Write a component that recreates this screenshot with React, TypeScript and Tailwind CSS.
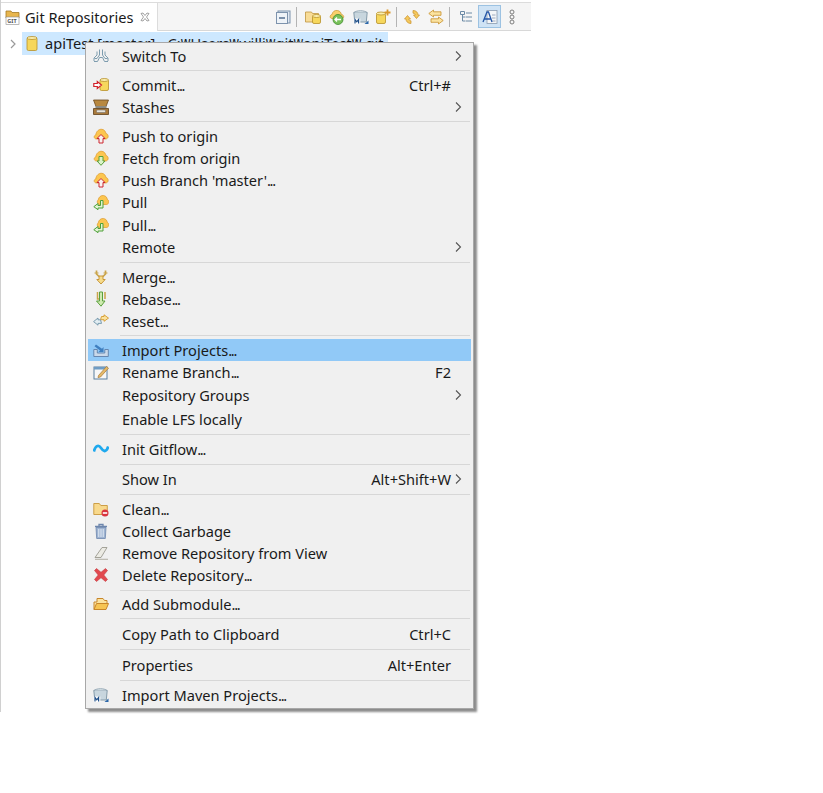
import React from 'react';

const F = '[font-family:"Noto_Sans",sans-serif]';

// ─── Icons ────────────────────────────────────────────────────────────────────

const Svg: React.FC<{ children: React.ReactNode; className?: string }> = ({ children, className }) => (
  <svg viewBox="0 0 16 16" width="16" height="16" className={className ?? 'shrink-0'}>{children}</svg>
);

const Cyl = ({ x, y, w, h }: { x: number; y: number; w: number; h: number }) => (
  <g>
    <rect x={x} y={y + 1} width={w} height={h - 2} rx={1.5} fill="#f6d75c" stroke="#b8912a" strokeWidth="0.8" />
    <ellipse cx={x + w / 2} cy={y + 1.5} rx={w / 2} ry={1.5} fill="#fbeeae" stroke="#b8912a" strokeWidth="0.8" />
  </g>
);

const Cloud = () => (
  <path d="M3.500 11C.8 11 .3 7.500 2.800 7 3 3.500 6 .8 9 1.300c2.500.4 3.600 2.300 3.900 4.200 2.800.3 3.200 5 .1 5.500z" fill="#fcc64f" stroke="#dc982b" strokeWidth="0.7" />
);

const CloudRight = () => (
  <path d="M6 10.500C4 9.500 3.600 6.800 5.200 6 5.700 3 7.800 1.300 10.300 1.500c2.500.2 3.800 2 4 3.900 2.200.8 1.900 4.600-.5 5.100z" fill="#fcc64f" stroke="#dc982b" strokeWidth="0.7" />
);

const UpArrow = () => <path d="M8 6.500l4 4H10V15H6v-4.500H4z" fill="#f8f2f0" stroke="#cc2630" strokeWidth="1" />;
const DownArrow = () => <path d="M6 6.500h4V11h2l-4 4.300L4 11h2z" fill="#dcf2c8" stroke="#58a03a" strokeWidth="1" />;
const PullArrow = () => <path d="M7.500 6.500V11.500H5V9.500L.8 12.700 5 15.700V14H10V6.500z" fill="#e2f4d2" stroke="#4ea03a" strokeWidth="1" />;

const icons: Record<string, React.ReactNode> = {
  switch: (
    <Svg>
      <g fill="none" stroke="#7d9cae" strokeWidth="1">
        <path d="M6.500 1.500v5.500M9.500 1.500v5.500M4 3.500V7L1 10v3M12 3.500V7l3 3v3" />
        <path d="M1 13.500h3.500l2-4h3l2 4H15M6.500 7L4 10.500M9.500 7L12 10.500M4 10.500H1.500M12 10.500h2.500" />
      </g>
    </Svg>
  ),
  commit: (
    <Svg>
      <Cyl x={7} y={1.500} w={8.500} h={13} />
      <path d="M.8 6.500h3.500V4.500L8.500 8 4.300 11.500V9.500H.8z" fill="#fff" stroke="#d2202a" strokeWidth="1.200" />
    </Svg>
  ),
  stash: (
    <Svg>
      <path d="M.5 1h15l-2.500 6.500H3z" fill="#b8883f" stroke="#6d4a1f" strokeWidth="0.8" />
      <rect x="2.500" y="7" width="11" height="2.500" fill="#8b8a82" />
      <path d="M.5 9.500h15v6H.5z" fill="#a97a3c" stroke="#5f4019" strokeWidth="0.8" />
      <rect x="3.500" y="11" width="9" height="2.500" rx="1" fill="#e8e4da" stroke="#666" strokeWidth="0.5" />
    </Svg>
  ),
  push: <Svg><Cloud /><UpArrow /></Svg>,
  fetch: <Svg><Cloud /><DownArrow /></Svg>,
  pull: <Svg><CloudRight /><PullArrow /></Svg>,
  merge: (
    <Svg>
      <path d="M3.500 1.500v3.500L6 7.500M12.500 1.500v3.500L10 7.500" fill="none" stroke="#c9a44a" strokeWidth="1.700" />
      <path d="M1.500 4h4M10.500 4h4" stroke="#c9a44a" strokeWidth="1.100" />
      <path d="M6 7h4v3.500h2.200L8 15l-4.200-4.500H6z" fill="#f6dc8c" stroke="#c48f2c" strokeWidth="0.9" />
    </Svg>
  ),
  rebase: (
    <Svg>
      <path d="M4.500 1v7h2M12 1v7" fill="none" stroke="#c9a44a" strokeWidth="1.500" />
      <path d="M6.500 1h3v9h2.500L8 15.200 3.500 10h3z" fill="#cfeab0" stroke="#5aa03c" strokeWidth="1" />
    </Svg>
  ),
  reset: (
    <Svg>
      <path d="M8.500 3.500H11V1.800l4.500 3.300L11 8.300V6.700H7.500z" fill="#fbe3a0" stroke="#d59a2a" strokeWidth="0.9" />
      <path d="M7.500 6.800H5V5L.6 8.600 5 12.200v-1.800h3.500z" fill="#e2edf2" stroke="#6e93a8" strokeWidth="0.9" />
    </Svg>
  ),
  import: (
    <Svg>
      <path d="M.8 7.500h3.500v3.500h7.500V7.500h3.500V14.500H.8z" fill="#c9d8ea" stroke="#5f7fa8" strokeWidth="0.9" />
      <path d="M3 2.500l6 4.300L10.500 5v5H5.500L7 8.500 1.500 4.300z" fill="#3f7fc0" />
    </Svg>
  ),
  rename: (
    <Svg>
      <rect x="1" y="3" width="13" height="12" fill="#f7f7f7" stroke="#5b7f9e" strokeWidth="1" />
      <rect x="1" y="3" width="13" height="2.500" fill="#6f9cc4" />
      <path d="M5.500 11.500l8-9 2 1.700L7.500 13l-2.500.6z" fill="#e6b968" stroke="#a3783a" strokeWidth="0.7" />
    </Svg>
  ),
  gitflow: (
    <Svg>
      <path d="M.8 10.500C3 3.500 6 4 8 7s5 5.500 7.300-1.500" fill="none" stroke="#1fa9ee" strokeWidth="2.800" />
    </Svg>
  ),
  clean: (
    <Svg>
      <path d="M.8 2.500h5.500l1.500 2h6.500v9H.8z" fill="#f8d98c" stroke="#c8963a" strokeWidth="0.9" />
      <circle cx="12" cy="12" r="3.500" fill="#d8343f" />
      <rect x="9.800" y="11.200" width="4.400" height="1.600" fill="#fff" />
    </Svg>
  ),
  trash: (
    <Svg>
      <path d="M2 3.500h12M6 3.500V1.500h4v2" fill="none" stroke="#6d86ad" strokeWidth="1.300" />
      <path d="M3 4.500h10L12.300 15.500H3.700z" fill="#9fb4d2" stroke="#6d86ad" strokeWidth="0.8" />
      <path d="M5.800 6v8M8 6v8M10.200 6v8" stroke="#e4ebf4" strokeWidth="1" />
    </Svg>
  ),
  remove: (
    <Svg>
      <path d="M2 12.500L9 2.500h5L8 12.500z" fill="#ecebe4" stroke="#9b9a90" strokeWidth="0.9" />
      <path d="M2 14.300h13" stroke="#b5b3a8" strokeWidth="1.100" />
    </Svg>
  ),
  del: (
    <Svg>
      <path d="M1.500 3.500L3.500 1.500 8 5.300 12.500 1.500l2 2L10.800 8l3.700 4.500-2 2L8 10.700 3.500 14.500l-2-2L5.200 8z" fill="#e2494f" stroke="#c43a40" strokeWidth="0.6" />
    </Svg>
  ),
  submodule: (
    <Svg>
      <path d="M1 13.500V6h3V2.500h6l1.500 2h2.500v4" fill="#fbe3a0" stroke="#c8862a" strokeWidth="1" />
      <path d="M1 13.500L3.500 7.500h12l-2.500 6z" fill="#f6c453" stroke="#c8862a" strokeWidth="1" />
    </Svg>
  ),
  maven: (
    <Svg>
      <path d="M.8 3.500h13.400L13.300 13H1.800z" fill="#c8d6de" stroke="#7b93a3" strokeWidth="0.9" />
      <path d="M.8 3.500c3-2.300 10.400-2.300 13.400 0" fill="#e2eaee" stroke="#7b93a3" strokeWidth="0.8" />
      <rect x=".8" y="9.500" width="6.500" height="5.500" fill="#fff" />
      <path d="M2 14.500V10.500l1.800 2.300 1.800-2.300v4" fill="none" stroke="#1f4f88" strokeWidth="1.200" />
      <path d="M15.500 11.500v3.500H11.500z" fill="#2a66a8" />
    </Svg>
  ),
};

// ─── Menu data ────────────────────────────────────────────────────────────────

type Item =
  | { sep: true; h: number; line: number }
  | { sep?: false; label: string; icon?: string; key_?: string; sub?: boolean; h?: number; active?: boolean };

const ITEMS: Item[] = [
  { label: 'Switch To', icon: 'switch', sub: true },
  { sep: true, h: 7, line: 3 },
  { label: 'Commit...', icon: 'commit', key_: 'Ctrl+#' },
  { label: 'Stashes', icon: 'stash', sub: true },
  { sep: true, h: 7, line: 3 },
  { label: 'Push to origin', icon: 'push' },
  { label: 'Fetch from origin', icon: 'fetch' },
  { label: "Push Branch 'master'...", icon: 'push' },
  { label: 'Pull', icon: 'pull' },
  { label: 'Pull...', icon: 'pull', h: 23 },
  { label: 'Remote', sub: true },
  { sep: true, h: 8, line: 4 },
  { label: 'Merge...', icon: 'merge' },
  { label: 'Rebase...', icon: 'rebase' },
  { label: 'Reset...', icon: 'reset' },
  { sep: true, h: 7, line: 3 },
  { label: 'Import Projects...', icon: 'import', active: true },
  { label: 'Rename Branch...', icon: 'rename', key_: 'F2' },
  { label: 'Repository Groups', sub: true, h: 24 },
  { label: 'Enable LFS locally', h: 23 },
  { sep: true, h: 8, line: 4 },
  { label: 'Init Gitflow...', icon: 'gitflow' },
  { sep: true, h: 8, line: 4 },
  { label: 'Show In', key_: 'Alt+Shift+W', sub: true },
  { sep: true, h: 8, line: 4 },
  { label: 'Clean...', icon: 'clean' },
  { label: 'Collect Garbage', icon: 'trash' },
  { label: 'Remove Repository from View', icon: 'remove' },
  { label: 'Delete Repository...', icon: 'del' },
  { sep: true, h: 7, line: 4 },
  { label: 'Add Submodule...', icon: 'submodule' },
  { sep: true, h: 8, line: 3 },
  { label: 'Copy Path to Clipboard', key_: 'Ctrl+C' },
  { sep: true, h: 9, line: 4 },
  { label: 'Properties', key_: 'Alt+Enter' },
  { sep: true, h: 8, line: 4 },
  { label: 'Import Maven Projects...', icon: 'maven' },
];

const Chevron = () => (
  <svg viewBox="0 0 8 12" width="8" height="12" className="shrink-0">
    <path d="M2 1.500L6.500 6 2 10.500" fill="none" stroke="#555" strokeWidth="1.100" />
  </svg>
);

// the trailing dots sit tight together in the reference
const Label = ({ text }: { text: string }) =>
  text.endsWith('...') ? (
    <span className="flex-1 pt-[2px]">
      {text.slice(0, -3)}
      <span className="tracking-[-1.300px]">...</span>
    </span>
  ) : (
    <span className="flex-1 pt-[2px]">{text}</span>
  );

// ─── Toolbar ──────────────────────────────────────────────────────────────────

const ToolSep = ({ l, r }: { l: string; r: string }) => <div className={`w-px h-[20px] bg-[#b4b4b4] ${l} ${r}`} />;

const Toolbar = () => (
  <div className="flex-1 h-[28px] bg-[#f5f5f5] border-b border-[#d8d8d8] flex items-center pl-[117px] gap-[8px]">
    <Svg><rect x="3" y="2" width="12" height="12" fill="#dfe8f2" stroke="#7d93ad" /><rect x="1.500" y="3.500" width="11" height="11" fill="#eef3f8" stroke="#7d93ad" /><path d="M4 9h6" stroke="#3c5a80" strokeWidth="1.300" /></Svg>
    <ToolSep l="-ml-[3px]" r="" />
    <Svg><path d="M.5 3h6l1 1.500h6V13H.5z" fill="#f8dc97" stroke="#bf9440" strokeWidth="0.8" /><Cyl x={7.500} y={5.500} w={8} h={10} /></Svg>
    <Svg><path d="M3 9.500C.5 9.500.5 6 3 5.500 3.500 2.500 6 1 8.500 1.500c2.200.4 3.800 2 3.800 4 2.800 0 3.200 3.500 1 4z" fill="#f9cf6a" stroke="#c8962f" strokeWidth="0.7" /><circle cx="9" cy="10.500" r="5" fill="#79c25a" stroke="#3f8a2c" strokeWidth="0.8" /><path d="M6 10.500h6M8 8.500l-2 2 2 2" fill="none" stroke="#fff" strokeWidth="1.300" /></Svg>
    {icons.maven}
    <Svg className="shrink-0 -ml-[2px]"><Cyl x={1.500} y={3} w={9} h={12.500} /><path d="M12.500 .5v6M9.500 3.500h6" stroke="#d9982a" strokeWidth="1.800" /></Svg>
    <ToolSep l="-ml-[3px]" r="-mr-[1px]" />
    <Svg><path d="M9 1.500c3.200 0 5 2 5 4.500h1.500L12.500 9.500 9.500 6H11.200C11.200 5 10.300 4.200 9 4.200z" fill="#f5c95c" stroke="#c8912c" strokeWidth="0.7" /><path d="M7 14.500c-3.200 0-5-2-5-4.500H.5L3.500 6.500 6.500 10H4.800c0 1 .9 1.800 2.200 1.800z" fill="#f5c95c" stroke="#c8912c" strokeWidth="0.7" /></Svg>
    <Svg><path d="M5.500 1L.8 4.500 5.500 8V6.300H13V2.800H5.500z" fill="#fbe3a0" stroke="#c8912c" strokeWidth="0.8" /><path d="M10.500 8l4.700 3.500L10.500 15V13.300H3V9.800h7.500z" fill="#fbe3a0" stroke="#c8912c" strokeWidth="0.8" /></Svg>
    <ToolSep l="-ml-[3px]" r="" />
    <Svg><path d="M2.500 2.500h4v3h-4zM8 4h6M8 8h6M8 12h6M4.500 5.500v6.500h3M4.500 8h3" fill="none" stroke="#6c8aa5" strokeWidth="1" /></Svg>
    <div className="w-[23px] h-[23px] -ml-[4px] bg-[#cfe3f5] border border-[#9cc2e2] flex items-center justify-center">
      <Svg><rect x="5" y="1.500" width="10" height="13" fill="#f4f6f8" stroke="#8b9bb0" strokeWidth="0.8" /><path d="M10 6h3.500M10 9h3.500M10 12h3.500" stroke="#8b9bb0" strokeWidth="0.8" /><path d="M1 13L5 3h1.500l3.500 10M2.500 10h6" fill="none" stroke="#2557a8" strokeWidth="1.300" /></Svg>
    </div>
    <svg viewBox="0 0 6 16" width="6" height="16" className="shrink-0">
      <circle cx="3" cy="3" r="2" fill="none" stroke="#7d7d7d" />
      <circle cx="3" cy="8" r="2" fill="none" stroke="#7d7d7d" />
      <circle cx="3" cy="13" r="2" fill="none" stroke="#7d7d7d" />
    </svg>
  </div>
);

// ─── Main ─────────────────────────────────────────────────────────────────────

export default function App() {
  return (
    <div className={`${F} relative w-[823px] h-[793px] bg-white text-[#1a1a1a] overflow-hidden`}>
      <div className="w-[531px] h-[712px] border-l border-[#d0d0d0] pt-[2px]">
        <div className="border-t border-[#dcdcdc] flex">
          {/* Tab */}
          <div className="w-[157px] h-[28px] border-r border-[#dcdcdc] flex items-center pl-[4px] text-[14.6px] bg-white">
            <Svg>
              <path d="M1 2h5l1 1.500h7V9H1z" fill="#e8b64e" stroke="#a57a24" strokeWidth="0.8" />
              <rect x="1" y="8" width="13" height="7.500" fill="#fff" stroke="#8a8a8a" strokeWidth="0.6" />
              <text x="2.300" y="14" fontSize="5.500" fontWeight="700" fill="#555">GIT</text>
            </Svg>
            <span className="ml-[4px] pt-[2px]">Git Repositories</span>
            <svg viewBox="0 0 10 10" width="10" height="10" className="ml-[7px]">
              <path d="M1 1.500L3 1l2 2.500L7 1l2 .5L6.500 5 9 8.500 7 9 5 6.500 3 9l-2-.5L3.500 5z" fill="none" stroke="#8c8c8c" strokeWidth="0.8" />
            </svg>
          </div>
          <Toolbar />
        </div>

        {/* Tree row */}
        <div className="flex items-center h-[23px] mt-[1px]">
          <svg viewBox="0 0 8 12" width="8" height="12" className="ml-[8px] shrink-0">
            <path d="M2 2l4 4-4 4" fill="none" stroke="#9a9a9a" strokeWidth="1.200" />
          </svg>
          <div className="ml-[5px] w-[366px] h-[23px] bg-[#cde8ff] flex items-center pl-[2px] text-[14.6px] whitespace-nowrap overflow-hidden">
            <Svg><Cyl x={3} y={.5} w={10} h={15} /></Svg>
            <span className="ml-[5px]">apiTest [master] - C:₩Users₩willi₩git₩apiTest₩.git</span>
          </div>
        </div>
      </div>

      {/* Context menu */}
      <div className="absolute left-[85px] top-[42px] w-[389px] h-[667px] bg-[#f0f0f0] border border-[#a8a8a8] shadow-[3px_3px_2px_rgba(0,0,0,0.45)] pt-[2px] pl-[2px] pr-[2px] text-[14.6px]">
        {ITEMS.map((it, i) =>
          it.sep ? (
            <div key={i} style={{ height: it.h, paddingTop: it.line }} className="pl-[32px] pr-[1px]">
              <div className="h-px bg-[#d7d7d7]" />
            </div>
          ) : (
            <div
              key={i}
              style={{ height: it.h ?? 22 }}
              className={`flex items-center whitespace-nowrap ${it.active ? 'bg-[#91c9f7]' : ''}`}
            >
              <div className="w-[34px] pl-[5px] flex items-center shrink-0">{it.icon && icons[it.icon]}</div>
              <Label text={it.label} />
              {it.key_ && <span className="mr-[3px] pt-[2px]">{it.key_}</span>}
              <div className="w-[16px] flex justify-start shrink-0 mr-[1px]">{it.sub && <Chevron />}</div>
            </div>
          )
        )}
      </div>
    </div>
  );
}
